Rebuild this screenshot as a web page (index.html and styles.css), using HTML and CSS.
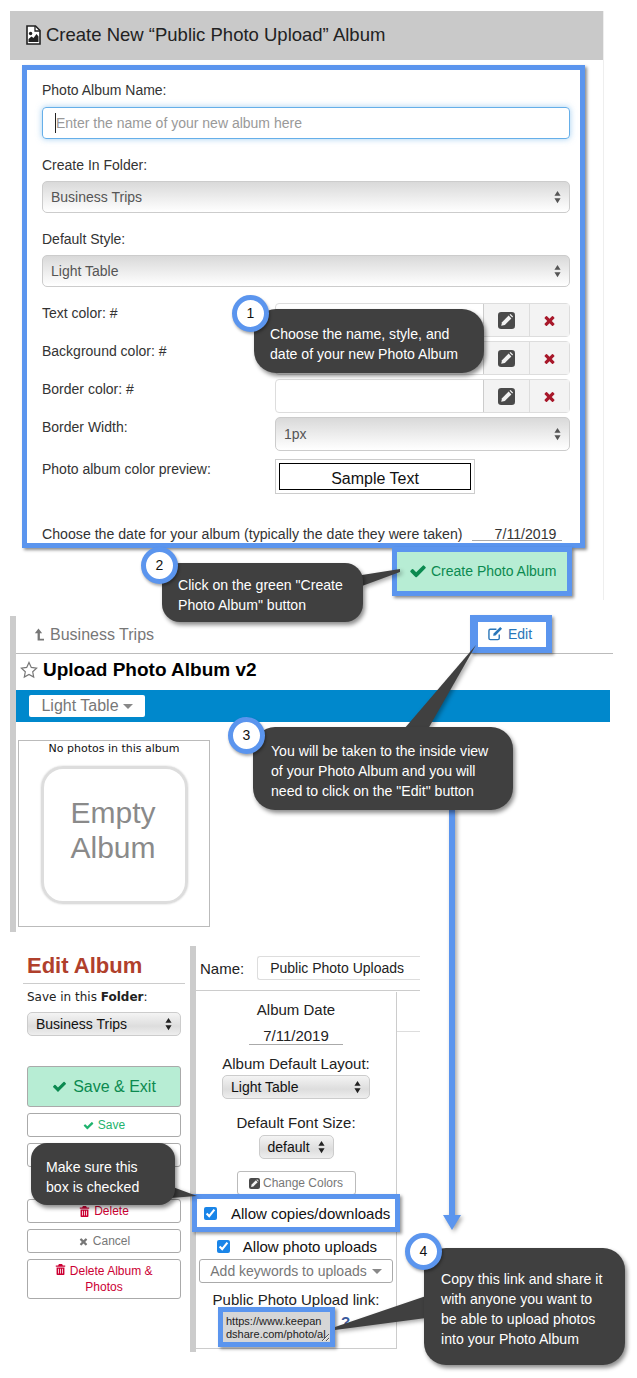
FILE: index.html
```html
<!DOCTYPE html>
<html lang="en">
<head>
    <meta charset="UTF-8">
    <meta name="viewport" content="width=device-width, initial-scale=1.0">
    <title>Public Photo Upload Album</title>
    <link rel="stylesheet" href="styles.css">
</head>
<body>
    <svg class="sprites" width="0" height="0">
        <symbol id="i-check" viewBox="0 0 1792 1792"><path d="M1671 566q0 40-28 68l-724 724-136 136q-28 28-68 28t-68-28l-136-136-362-362q-28-28-28-68t28-68l136-136q28-28 68-28t68 28l294 295 656-657q28-28 68-28t68 28l136 136q28 28 28 68z"/></symbol>
        <symbol id="i-times" viewBox="0 0 1792 1792"><path d="M1490 1322q0 40-28 68l-136 136q-28 28-68 28t-68-28l-294-294-294 294q-28 28-68 28t-68-28l-136-136q-28-28-28-68t28-68l294-294-294-294q-28-28-28-68t28-68l136-136q28-28 68-28t68 28l294 294 294-294q28-28 68-28t68 28l136 136q28 28 28 68t-28 68l-294 294 294 294q28 28 28 68z"/></symbol>
        <symbol id="i-pencil" viewBox="0 0 16 16"><rect x="0" y="0" width="16" height="16" rx="3" fill="#4a4a4a"/><path d="M3 13l.8-3.400 6.200-6.200 2.600 2.600-6.200 6.200z" fill="#f2f2f2"/><path d="M10.800 2.600l1-.8 2.400 2.400-.8 1z" fill="#f2f2f2"/></symbol>
        <symbol id="i-trash" viewBox="0 0 12 14"><path d="M4 0h4l1 2h3v1.500H0V2h3zM1 4.500h10V13a1 1 0 0 1-1 1H2a1 1 0 0 1-1-1zM3 6v6h1V6zm2.500 0v6h1V6zM8 6v6h1V6z" fill-rule="evenodd"/></symbol>
        <symbol id="i-updown" viewBox="0 0 8 16"><path d="M4 1l3.500 5.500h-7zM4 15L.5 9.500h7z"/></symbol>
    </svg>

    <section class="create-panel">
        <h1 class="create-title">
            <svg class="file-icon" viewBox="0 0 15 20"><path d="M1 1h8.500L14 5.500V19H1z" fill="#fff" stroke="#222" stroke-width="1.600"/><path d="M9 1v5h5" fill="none" stroke="#222" stroke-width="1.300"/><circle cx="4.600" cy="8.500" r="1.700" fill="#222"/><path d="M2.500 17v-3l3-2.500 2 1.500 3-4 2 2.500V17z" fill="#222"/></svg>
            Create New “Public Photo Upload” Album
        </h1>
        <form class="album-frame">
            <label class="field-label">Photo Album Name:</label>
            <div class="name-input"><span class="caret"></span>Enter the name of your new album here</div>
            <label class="field-label">Create In Folder:</label>
            <div class="pick pick-wide"><span>Business Trips</span><svg class="updown"><use href="#i-updown"/></svg></div>
            <label class="field-label">Default Style:</label>
            <div class="pick pick-wide"><span>Light Table</span><svg class="updown"><use href="#i-updown"/></svg></div>

            <div class="color-grid">
                <span>Text color: #</span>
                <div class="color-row"><div class="color-input"></div><div class="color-btn edit-btn"><svg class="pen"><use href="#i-pencil"/></svg></div><div class="color-btn clear-btn"><svg class="cross"><use href="#i-times"/></svg></div></div>
                <span>Background color: #</span>
                <div class="color-row"><div class="color-input"></div><div class="color-btn edit-btn"><svg class="pen"><use href="#i-pencil"/></svg></div><div class="color-btn clear-btn"><svg class="cross"><use href="#i-times"/></svg></div></div>
                <span>Border color: #</span>
                <div class="color-row"><div class="color-input"></div><div class="color-btn edit-btn"><svg class="pen"><use href="#i-pencil"/></svg></div><div class="color-btn clear-btn"><svg class="cross"><use href="#i-times"/></svg></div></div>
                <span>Border Width:</span>
                <div class="pick pick-wide"><span>1px</span><svg class="updown"><use href="#i-updown"/></svg></div>
                <span class="preview-label">Photo album color preview:</span>
                <div class="preview"><div class="preview-inner">Sample Text</div></div>
            </div>

            <div class="date-row">
                <span>Choose the date for your album (typically the date they were taken)</span>
                <span class="date-value">7/11/2019</span>
            </div>
        </form>
        <div class="create-btn">
            <svg class="create-check"><use href="#i-check"/></svg>
            Create Photo Album
        </div>
    </section>

    <section class="album-panel">
        <div class="crumb-row">
            <div class="crumb">
                <svg class="crumb-icon" viewBox="0 0 12 14"><path d="M6 0l4 5H7.500v6H12v2H5V5H2z"/></svg>
                Business Trips
            </div>
            <div class="edit-frame">
                <svg class="edit-icon" viewBox="0 0 16 16"><path d="M12 9v4a1.500 1.500 0 0 1-1.500 1.500h-8A1.500 1.500 0 0 1 1 13V5a1.500 1.500 0 0 1 1.500-1.500H9" fill="none" stroke="#2a76b8" stroke-width="1.500"/><path d="M6 8l7-7 2 2-7 7-2.500.5z" fill="#2a76b8"/></svg>
                Edit
            </div>
        </div>
        <div class="album-title">
            <svg class="star" viewBox="0 0 18 18"><path d="M9 1.500l2.300 4.900 5.300.7-3.900 3.700 1 5.300L9 13.500l-4.700 2.600 1-5.300L1.400 7.100l5.300-.7z" fill="none" stroke="#777" stroke-width="1.200"/></svg>
            Upload Photo Album v2
        </div>
        <div class="blue-bar"><div class="layout-btn">Light Table <span class="down-caret"></span></div></div>
        <div class="album-box">
            <p class="no-photos">No photos in this album</p>
            <div class="empty-album">Empty<br>Album</div>
        </div>
    </section>

    <section class="edit-panel">
        <div class="edit-side">
            <h2 class="edit-heading">Edit Album</h2>
            <div class="side-inner">
                <p class="folder-label">Save in this <b>Folder</b>:</p>
                <div class="pick pick-small side-pick"><span>Business Trips</span><svg class="updown dark"><use href="#i-updown"/></svg></div>
                <div class="side-btn save-exit"><svg class="btn-check"><use href="#i-check"/></svg> Save &amp; Exit</div>
                <div class="side-btn save"><svg class="small-icon"><use href="#i-check"/></svg> Save</div>
                <div class="side-btn blank"></div>
                <div class="side-btn danger delete"><svg class="small-icon"><use href="#i-trash"/></svg> Delete</div>
                <div class="side-btn cancel"><svg class="small-icon"><use href="#i-times"/></svg> Cancel</div>
                <div class="side-btn danger delete-all"><span><svg class="small-icon"><use href="#i-trash"/></svg> Delete Album &amp;<br>Photos</span></div>
            </div>
        </div>
        <div class="edit-main">
            <div class="name-row">
                <span>Name:</span>
                <div class="album-name">Public Photo Uploads</div>
            </div>
            <div class="main-split">
                <div class="settings">
                    <div class="set-label date-label">Album Date</div>
                    <div class="set-date">7/11/2019</div>
                    <div class="set-label">Album Default Layout:</div>
                    <div class="pick pick-small layout-pick"><span>Light Table</span><svg class="updown dark"><use href="#i-updown"/></svg></div>
                    <div class="set-label font-label">Default Font Size:</div>
                    <div class="pick pick-small font-pick"><span>default</span><svg class="updown dark"><use href="#i-updown"/></svg></div>
                    <div class="change-colors"><svg class="small-pen"><use href="#i-pencil"/></svg> Change Colors</div>
                    <label class="allow-frame"><input type="checkbox" checked> Allow copies/downloads</label>
                    <label class="allow-row"><input type="checkbox" checked> Allow photo uploads</label>
                    <div class="keywords">Add keywords to uploads <span class="down-caret"></span></div>
                    <div class="set-label link-label">Public Photo Upload link:</div>
                    <div class="link-row">
                        <textarea class="link-box" readonly>https://www.keepandshare.com/photo/album</textarea>
                        <span class="help">?</span>
                    </div>
                </div>
                <div class="side-rule"></div>
            </div>
        </div>
    </section>

    <!-- annotations on top of the screenshot -->
    <svg class="arrows" viewBox="0 0 637 1378">
        <path class="tail" d="M362 575L400 569V572L362 586z"/>
        <path class="tail" d="M476 645L404 729H428z"/>
        <path class="tail" d="M170 1186L197 1196 170 1198z"/>
        <path class="tail" d="M426 1296L335 1327V1330L426 1318z"/>
        <path class="blue-arrow" d="M449 808H455V1215H461L452 1230 443 1215H449z"/>
    </svg>

    <div class="callout c1">Choose the name, style, and<br>date of your new Photo Album</div>
    <div class="callout c2">Click on the green "Create<br>Photo Album" button</div>
    <div class="callout c3">You will be taken to the inside view<br>of your Photo Album and you will<br>need to click on the "Edit" button</div>
    <div class="callout c5">Make sure this<br>box is checked</div>
    <div class="callout c4">Copy this link and share it<br>with anyone you want to<br>be able to upload photos<br>into your Photo Album</div>

    <div class="step s1">1</div>
    <div class="step s2">2</div>
    <div class="step s3">3</div>
    <div class="step s4">4</div>
</body>
</html>
```

FILE: styles.css
```css
* {
    box-sizing: border-box;
}

body {
    font-family: "Liberation Sans", Arial, sans-serif;
    font-size: 14px;
    color: #333;
    background: #fff;
    margin: 0;
    height: 1378px;
    position: relative;
    overflow: hidden;
}

.sprites {
    position: absolute;
}

/* first screenshot: create form */
.create-panel {
    margin: 11px 0 0 10px;
    width: 594px;
    height: 589px;
    border-right: 1px solid #eee;
}

.create-title {
    display: flex;
    align-items: center;
    gap: 5px;
    height: 49px;
    margin: 0;
    padding: 0 0 2px 16px;
    background: #c9c9c9;
    font-size: 18.500px;
    font-weight: normal;
    color: #222;
}

.file-icon {
    width: 15px;
    height: 20px;
}

.album-frame {
    width: 563px;
    height: 483px;
    margin: 5px 0 0 12px;
    padding: 10px 10px 0 15px;
    border: 5px solid #5b95ee;
    box-shadow: 2px 2px 3px rgba(0, 0, 0, 0.45);
}

.field-label {
    display: block;
    line-height: 20px;
    margin-bottom: 6px;
}

.name-input {
    display: flex;
    align-items: center;
    height: 32px;
    margin: 7px 0 16px;
    padding-left: 12px;
    color: #999;
    border: 1px solid #66afe9;
    border-radius: 4px;
    box-shadow: 0 0 6px rgba(102, 175, 233, 0.6);
}

.caret {
    width: 1px;
    height: 20px;
    background: #222;
}

.pick {
    display: flex;
    align-items: center;
    justify-content: space-between;
    background: linear-gradient(#d9d9d9, #f4f4f4 70%, #fff);
    border: 1px solid #ccc;
    border-radius: 5px;
}

.pick-wide {
    height: 32px;
    padding: 0 8px;
    margin-bottom: 16px;
    color: #555;
}

.updown {
    width: 7px;
    height: 14px;
    fill: #555;
}

.updown.dark {
    fill: #222;
}

.color-grid {
    display: grid;
    grid-template-columns: 233px 295px;
    grid-auto-rows: 34px;
    row-gap: 4px;
    line-height: 20px;
}

.color-grid .pick-wide {
    margin: 0;
    height: 34px;
}

.color-row {
    display: flex;
    height: 34px;
    border: 1px solid #ddd;
    border-radius: 4px;
}

.color-input {
    flex: 1;
    border-right: 1px solid #ccc;
}

.color-btn {
    display: flex;
    align-items: center;
    justify-content: center;
    background: #f3f3f3;
}

.edit-btn {
    width: 46px;
    border-right: 1px solid #ddd;
}

.clear-btn {
    width: 39px;
}

.pen {
    width: 17px;
    height: 17px;
}

.cross {
    width: 15px;
    height: 15px;
    fill: #a8182a;
}

.preview-label {
    margin-top: 4px;
}

.preview {
    width: 200px;
    height: 35px;
    margin-top: 4px;
    padding: 3px;
    border: 1px solid #ccc;
}

.preview-inner {
    height: 27px;
    line-height: 29px;
    text-align: center;
    font-size: 16px;
    color: #111;
    border: 1px solid #000;
}

.date-row {
    display: flex;
    margin-top: 35px;
    font-size: 14.150px;
    line-height: 20px;
}

.date-value {
    width: 90px;
    margin-left: 9px;
    padding-left: 18px;
    text-align: center;
    border-bottom: 1px solid #aaa;
    height: 17px;
    line-height: 20px;
}

.create-btn {
    display: flex;
    align-items: center;
    gap: 4px;
    width: 180px;
    height: 49px;
    margin: -1px 0 0 382px;
    padding: 0 0 1px 12px;
    color: #0b8a50;
    background: #b7edd4;
    border: 5px solid #5b95ee;
    box-shadow: 2px 2px 3px rgba(0, 0, 0, 0.45);
}

.create-check {
    width: 18px;
    height: 18px;
    fill: #0b8a50;
}

/* second screenshot: album view */
.album-panel {
    margin: 16px 0 0 10px;
    width: 603px;
    height: 316px;
    border-left: 6px solid #ccc;
}

.crumb-row {
    display: flex;
    justify-content: space-between;
    height: 38px;
    border-bottom: 1px solid #bbb;
}

.crumb {
    display: flex;
    align-items: center;
    gap: 6px;
    padding-left: 17px;
    font-size: 16px;
    color: #777;
}

.crumb-icon {
    width: 11px;
    height: 14px;
    fill: #777;
}

.edit-frame {
    display: flex;
    align-items: center;
    justify-content: center;
    gap: 5px;
    width: 82px;
    height: 38px;
    margin: -1px 61px 0 0;
    padding: 0 4px 2px 0;
    color: #2a76b8;
    background: #fff;
    border: 5px solid #5b95ee;
    border-width: 7px 6px 6px 8px;
    box-shadow: 2px 2px 3px rgba(0, 0, 0, 0.4);
}

.edit-icon {
    width: 15px;
    height: 15px;
}

.album-title {
    display: flex;
    align-items: center;
    gap: 5px;
    height: 36px;
    padding: 0 0 4px 4px;
    font-size: 19px;
    font-weight: bold;
    color: #000;
}

.star {
    width: 18px;
    height: 18px;
}

.blue-bar {
    height: 32px;
    width: 594px;
    padding: 5px 0 0 13px;
    background: #0088cc;
}

.layout-btn {
    display: flex;
    align-items: center;
    justify-content: center;
    gap: 4px;
    width: 116px;
    height: 22px;
    font-size: 16px;
    color: #777;
    background: #fff;
    border-radius: 2px;
}

.down-caret {
    width: 0;
    height: 0;
    border-left: 5px solid transparent;
    border-right: 5px solid transparent;
    border-top: 5px solid #888;
}

.album-box {
    width: 192px;
    height: 187px;
    margin: 18px 0 0 2px;
    border: 1px solid #bbb;
}

.no-photos {
    margin: 0;
    padding-top: 1px;
    text-align: center;
    font-family: "DejaVu Sans", Verdana, sans-serif;
    font-size: 11px;
    line-height: 13px;
    color: #111;
}

.empty-album {
    width: 147px;
    height: 138px;
    margin: 11px 0 0 22px;
    padding: 26px 3px 0 0;
    text-align: center;
    font-size: 30px;
    line-height: 35px;
    color: #8a8a8a;
    border: 3px solid #ddd;
    border-radius: 22px;
    box-shadow: 0 0 2px #ccc;
}

/* third screenshot: edit album */
.edit-panel {
    display: flex;
    margin: 14px 0 0 23px;
    height: 406px;
}

.edit-side {
    width: 162px;
}

.edit-heading {
    height: 38px;
    margin: 0;
    padding: 7px 0 0 4px;
    font-size: 22px;
    line-height: 26px;
    color: #b0402c;
    border-bottom: 1px solid #ccc;
}

.side-inner {
    padding: 4px 4px 0;
}

.folder-label {
    margin: 0;
    font-family: "DejaVu Sans", Verdana, sans-serif;
    font-size: 12px;
    line-height: 18px;
    color: #222;
}

.pick-small {
    height: 24px;
    padding: 0 8px;
    color: #111;
    background: linear-gradient(#f4f4f4, #ddd 60%, #eee);
}

.side-pick {
    margin-top: 6px;
    font-size: 14px;
}

.side-btn {
    display: flex;
    align-items: center;
    justify-content: center;
    gap: 4px;
    height: 24px;
    margin-top: 6px;
    font-size: 12px;
    color: #777;
    border: 1px solid #aaa;
    border-radius: 3px;
}

.side-btn svg {
    fill: currentColor;
}

.save-exit {
    height: 41px;
    margin-top: 30px;
    font-size: 16px;
    color: #0b8a50;
    background: #b7edd4;
    gap: 6px;
}

.btn-check {
    width: 15px;
    height: 15px;
}

.small-icon {
    width: 11px;
    height: 11px;
}

.save {
    margin-top: 6px;
    color: #1fb36e;
}

.danger {
    color: #cc0033;
}

.delete {
    margin-top: 32px;
}

.delete-all {
    height: 40px;
    text-align: center;
    line-height: 16px;
}

.edit-main {
    width: 230px;
    margin-left: 5px;
    padding-left: 0;
    border-left: 6px solid #ccc;
}

.name-row {
    display: flex;
    align-items: center;
    gap: 13px;
    height: 45px;
    padding: 0 0 0 4px;
    font-size: 15px;
    color: #222;
    border-bottom: 1px solid #ccc;
}

.album-name {
    width: 163px;
    height: 24px;
    margin-top: -1px;
    padding-left: 12px;
    line-height: 22px;
    font-size: 14px;
    border: 1px solid #ddd;
    border-right: none;
    border-radius: 3px 0 0 3px;
}

.main-split {
    display: flex;
    height: 361px;
}

.settings {
    width: 201px;
    height: 357px;
    margin-top: 1px;
    border-right: 1px solid #ccc;
    border-bottom: 1px solid #ccc;
    display: flex;
    flex-direction: column;
    align-items: center;
    position: relative;
}

.set-label {
    font-size: 15px;
    line-height: 18px;
    color: #222;
}

.date-label {
    margin-top: 9px;
}

.set-date {
    width: 94px;
    height: 18px;
    margin-top: 8px;
    text-align: center;
    font-size: 15px;
    line-height: 17px;
    border-bottom: 1px solid #aaa;
    color: #222;
    margin-bottom: 10px;
}

.layout-pick {
    width: 148px;
    margin-top: 2px;
    font-size: 14px;
}

.font-label {
    margin-top: 15px;
}

.font-pick {
    width: 75px;
    margin-top: 3px;
    font-size: 14px;
}

.change-colors {
    display: flex;
    align-items: center;
    justify-content: center;
    gap: 3px;
    width: 119px;
    height: 24px;
    margin-top: 12px;
    font-size: 12px;
    color: #777;
    border: 1px solid #bbb;
    border-radius: 3px;
}

.small-pen {
    width: 11px;
    height: 11px;
}

.allow-frame {
    display: flex;
    align-items: center;
    gap: 14px;
    align-self: flex-start;
    width: 208px;
    height: 38px;
    margin: -1px 0 0 -4px;
    padding: 1px 0 0 7px;
    font-size: 15px;
    color: #111;
    background: #fff;
    border: 5px solid #5b95ee;
    box-shadow: 2px 2px 3px rgba(0, 0, 0, 0.4);
}

.allow-frame input,
.allow-row input {
    width: 13px;
    height: 13px;
    margin: 0;
    accent-color: #1a85e8;
}

.allow-row {
    display: flex;
    align-items: center;
    gap: 13px;
    height: 20px;
    margin: 4px 0 0 2px;
    font-size: 15px;
    color: #111;
}

.keywords {
    display: flex;
    align-items: center;
    justify-content: center;
    gap: 5px;
    width: 194px;
    height: 24px;
    font-size: 14px;
    color: #777;
    border: 1px solid #aaa;
    border-radius: 3px;
    margin-top: 3px;
}

.link-label {
    margin-top: 8px;
}

.link-row {
    display: flex;
    align-items: flex-start;
    align-self: flex-start;
    gap: 6px;
    margin: -2px 0 0 22px;
}

.link-box {
    display: block;
    width: 117px;
    height: 40px;
    padding: 3px 4px 0 3px;
    font-family: "Liberation Sans", Arial, sans-serif;
    font-size: 11px;
    line-height: 13px;
    color: #222;
    background: #d6d6d6;
    border: 5px solid #5b95ee;
    border-radius: 0;
    overflow: hidden;
    outline: none;
    box-shadow: 2px 2px 3px rgba(0, 0, 0, 0.4);
}

.help {
    margin-top: 6px;
    font-size: 15px;
    font-weight: bold;
    color: #3a5a9c;
}

.side-rule {
    width: 24px;
    height: 41px;
    border-bottom: 1px solid #ddd;
}

/* annotations */
.arrows {
    position: absolute;
    top: 0;
    left: 0;
    width: 637px;
    height: 1378px;
    filter: drop-shadow(2px 2px 2px rgba(0, 0, 0, 0.35));
}

.tail {
    fill: #404040;
}

.blue-arrow {
    fill: #5b95ee;
}

.callout {
    position: absolute;
    font-size: 14.100px;
    line-height: 20px;
    color: #fff;
    background: #404040;
    box-shadow: 2px 3px 4px rgba(0, 0, 0, 0.45);
}

.c1 {
    left: 254px;
    top: 309px;
    width: 230px;
    height: 64px;
    padding: 15px 0 0 16px;
    border-radius: 22px;
}

.c2 {
    left: 162px;
    top: 563px;
    width: 201px;
    height: 59px;
    padding: 12px 0 0 16px;
    border-radius: 18px;
}

.c3 {
    left: 253px;
    top: 727px;
    width: 260px;
    height: 83px;
    padding: 14px 0 0 18px;
    border-radius: 22px;
}

.c4 {
    left: 424px;
    top: 1248px;
    width: 201px;
    height: 117px;
    padding: 21px 0 0 17px;
    border-radius: 22px;
}

.c5 {
    left: 31px;
    top: 1143px;
    width: 144px;
    height: 62px;
    padding: 14px 0 0 15px;
    border-radius: 16px;
}

.step {
    position: absolute;
    width: 37px;
    height: 37px;
    line-height: 27px;
    text-align: center;
    font-size: 14px;
    color: #111;
    background: #fff;
    border: 5px solid #5b95ee;
    border-radius: 50%;
    box-shadow: 1px 2px 3px rgba(0, 0, 0, 0.35);
}

.s1 {
    left: 232px;
    top: 295px;
}

.s2 {
    left: 141px;
    top: 547px;
}

.s3 {
    left: 228px;
    top: 717px;
}

.s4 {
    left: 405px;
    top: 1233px;
}
```
